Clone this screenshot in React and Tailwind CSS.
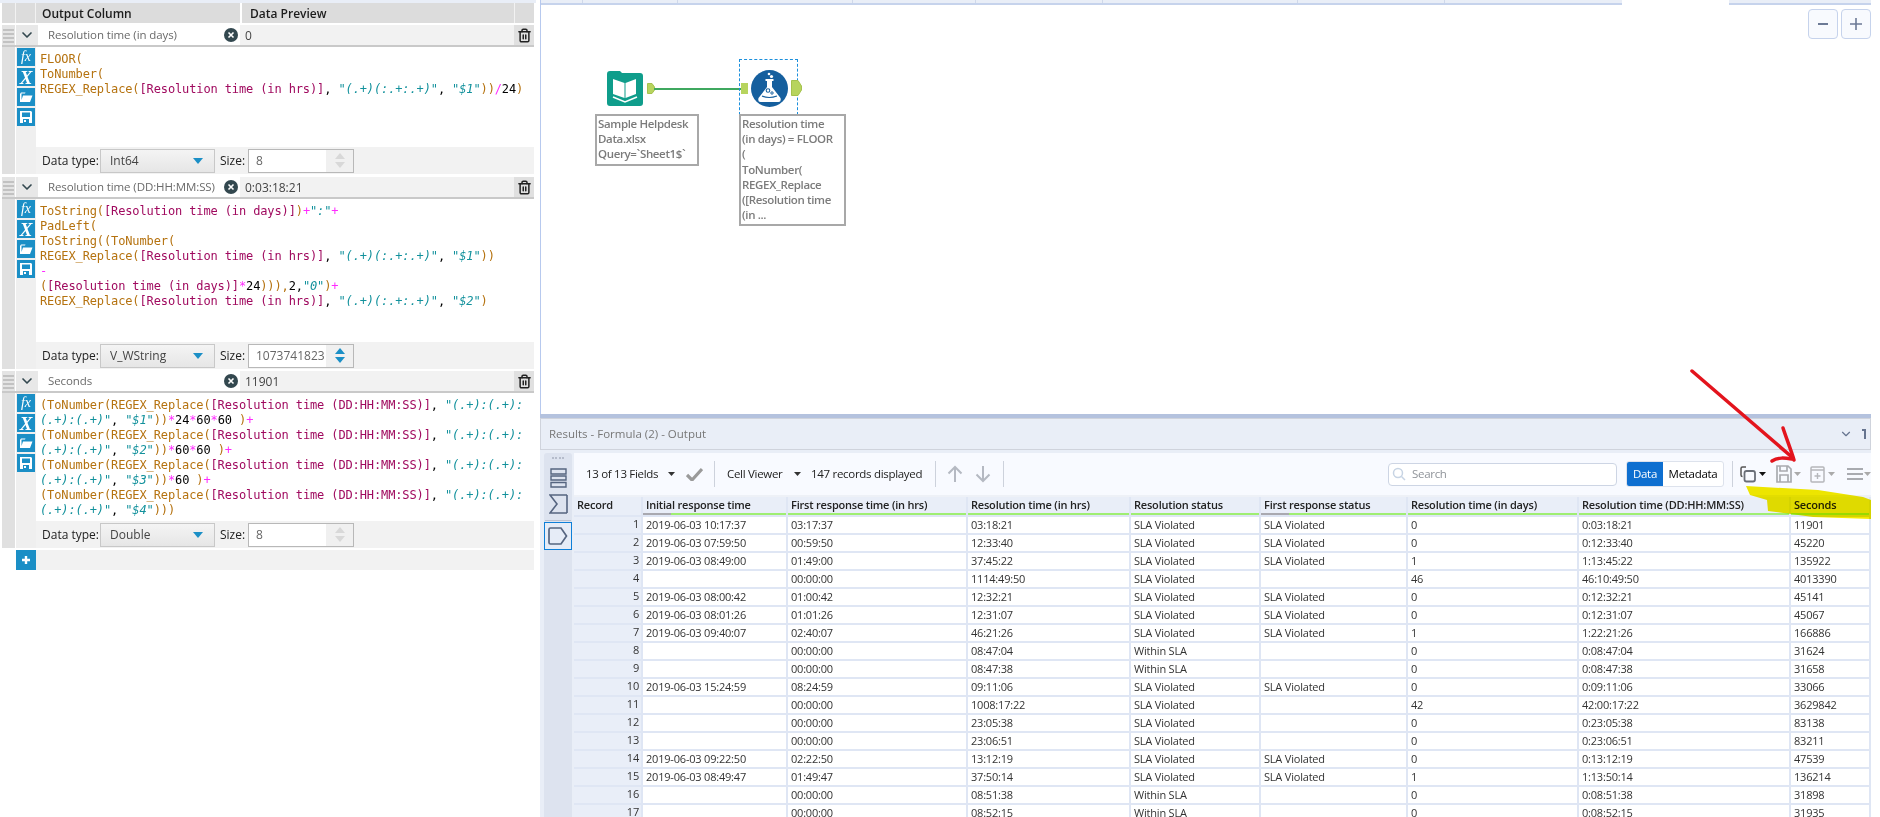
import { ChevronDown, Trash2 } from "lucide-react";

const F = ({ children }) => <span className="text-[#b5720f]">{children}</span>;
const B = ({ children }) => <span className="text-[#a00a5f]">{children}</span>;
const S = ({ children }) => <span className="text-[#12919c] italic">{children}</span>;
const O = ({ children }) => <span className="text-[#ff2bff]">{children}</span>;
const N = ({ children }) => <span className="text-black">{children}</span>;

const secLine = (n, tail) => (
  <>
    <F>(ToNumber(REGEX_Replace(</F>
    <B>[Resolution time (DD:HH:MM:SS)]</B>
    <N>, </N>
    <S>"(.+):(.+):</S>
    {"\n"}
    <S>(.+):(.+)"</S>
    <N>, </N>
    <S>"${n}"</S>
    {tail}
  </>
);

const expressions = [
  {
    name: "Resolution time (in days)",
    preview: "0",
    codeH: "h-[100px]",
    gap: "mb-[3px]",
    type: "Int64",
    size: "8",
    code: (
      <>
        <F>FLOOR(</F>
        {"\n"}
        <F>ToNumber(</F>
        {"\n"}
        <F>REGEX_Replace(</F>
        <B>[Resolution time (in hrs)]</B>
        <N>, </N>
        <S>"(.+)(:.+:.+)"</S>
        <N>, </N>
        <S>"$1"</S>
        <F>))</F>
        <O>/</O>
        <N>24</N>
        <F>)</F>
      </>
    ),
  },
  {
    name: "Resolution time (DD:HH:MM:SS)",
    preview: "0:03:18:21",
    codeH: "h-[143px]",
    gap: "mb-[2px]",
    type: "V_WString",
    size: "1073741823",
    active: true,
    code: (
      <>
        <F>ToString(</F>
        <B>[Resolution time (in days)]</B>
        <F>)</F>
        <O>+</O>
        <S>":"</S>
        <O>+</O>
        {"\n"}
        <F>PadLeft(</F>
        {"\n"}
        <F>ToString((ToNumber(</F>
        {"\n"}
        <F>REGEX_Replace(</F>
        <B>[Resolution time (in hrs)]</B>
        <N>, </N>
        <S>"(.+)(:.+:.+)"</S>
        <N>, </N>
        <S>"$1"</S>
        <F>))</F>
        {"\n"}
        <O>-</O>
        {"\n"}
        <F>(</F>
        <B>[Resolution time (in days)]</B>
        <O>*</O>
        <N>24</N>
        <F>))),</F>
        <N>2,</N>
        <S>"0"</S>
        <F>)</F>
        <O>+</O>
        {"\n"}
        <F>REGEX_Replace(</F>
        <B>[Resolution time (in hrs)]</B>
        <N>, </N>
        <S>"(.+)(:.+:.+)"</S>
        <N>, </N>
        <S>"$2"</S>
        <F>)</F>
      </>
    ),
  },
  {
    name: "Seconds",
    preview: "11901",
    codeH: "h-[128px]",
    gap: "mb-[2px]",
    type: "Double",
    size: "8",
    code: (
      <>
        {secLine(1, <><F>))</F><O>*</O><N>24</N><O>*</O><N>60</N><O>*</O><N>60 </N><F>)</F><O>+</O></>)}
        {"\n"}
        {secLine(2, <><F>))</F><O>*</O><N>60</N><O>*</O><N>60 </N><F>)</F><O>+</O></>)}
        {"\n"}
        {secLine(3, <><F>))</F><O>*</O><N>60 </N><F>)</F><O>+</O></>)}
        {"\n"}
        {secLine(4, <F>)))</F>)}
      </>
    ),
  },
];

const SV = "SLA Violated";
const WS = "Within SLA";
const d = "2019-06-03 ";
const rows = [
  [d + "10:17:37", "03:17:37", "03:18:21", SV, SV, "0", "0:03:18:21", "11901"],
  [d + "07:59:50", "00:59:50", "12:33:40", SV, SV, "0", "0:12:33:40", "45220"],
  [d + "08:49:00", "01:49:00", "37:45:22", SV, SV, "1", "1:13:45:22", "135922"],
  ["", "00:00:00", "1114:49:50", SV, "", "46", "46:10:49:50", "4013390"],
  [d + "08:00:42", "01:00:42", "12:32:21", SV, SV, "0", "0:12:32:21", "45141"],
  [d + "08:01:26", "01:01:26", "12:31:07", SV, SV, "0", "0:12:31:07", "45067"],
  [d + "09:40:07", "02:40:07", "46:21:26", SV, SV, "1", "1:22:21:26", "166886"],
  ["", "00:00:00", "08:47:04", WS, "", "0", "0:08:47:04", "31624"],
  ["", "00:00:00", "08:47:38", WS, "", "0", "0:08:47:38", "31658"],
  [d + "15:24:59", "08:24:59", "09:11:06", SV, SV, "0", "0:09:11:06", "33066"],
  ["", "00:00:00", "1008:17:22", SV, "", "42", "42:00:17:22", "3629842"],
  ["", "00:00:00", "23:05:38", SV, "", "0", "0:23:05:38", "83138"],
  ["", "00:00:00", "23:06:51", SV, "", "0", "0:23:06:51", "83211"],
  [d + "09:22:50", "02:22:50", "13:12:19", SV, SV, "0", "0:13:12:19", "47539"],
  [d + "08:49:47", "01:49:47", "37:50:14", SV, SV, "1", "1:13:50:14", "136214"],
  ["", "00:00:00", "08:51:38", WS, "", "0", "0:08:51:38", "31898"],
  ["", "00:00:00", "08:52:15", WS, "", "0", "0:08:52:15", "31935"],
];

const headers = [
  { label: "Initial response time", gray: true },
  { label: "First response time (in hrs)" },
  { label: "Resolution time (in hrs)" },
  { label: "Resolution status" },
  { label: "First response status", gray: true },
  { label: "Resolution time (in days)" },
  { label: "Resolution time (DD:HH:MM:SS)" },
  { label: "Seconds" },
];

const gridCols = "grid grid-cols-[67px_143px_178px_161px_128px_145px_169px_210px_78px] gap-x-[2px]";

function IconBtn({ children }) {
  return (
    <div className="w-[18px] h-[18px] bg-[#1b8fc6] flex items-center justify-center text-white overflow-hidden">
      {children}
    </div>
  );
}

function Grip() {
  return (
    <div className="flex flex-col gap-[2px] w-[11px] pt-[4px]">
      <div className="h-[2px] bg-[#c2c2c2]" />
      <div className="h-[2px] bg-[#c2c2c2]" />
      <div className="h-[2px] bg-[#c2c2c2]" />
      <div className="h-[2px] bg-[#c2c2c2]" />
    </div>
  );
}

function ExpressionRow({ item }) {
  return (
    <div className={item.gap}>
      <div className="flex h-[20px] bg-[#f2f2f2]">
        <div className="w-[13px] pl-[1px] bg-[#e4e4e4]">
          <Grip />
        </div>
        <div className="w-[1px] bg-white" />
        <div className="w-[21px] bg-[#e8e8e8] flex items-center justify-center">
          <ChevronDown size={16} strokeWidth={2.5} className="text-[#33484f]" />
        </div>
        <div className="w-[203px] relative bg-white border-l border-[#e8e8e8] pl-[10px] text-[11.5px] tracking-[-0.1px] leading-[19px] text-[#6a6a6a] whitespace-nowrap">
          {item.name}
          <div className="absolute right-[2px] top-[3px] w-[14px] h-[14px] rounded-full bg-[#33484f] text-white flex items-center justify-center">
            <svg width="8" height="8" viewBox="0 0 8 8">
              <path d="M1.5 1.5 L6.5 6.5 M6.5 1.5 L1.5 6.5" stroke="white" strokeWidth="1.6" />
            </svg>
          </div>
        </div>
        <div className="w-[274px] pl-[5px] text-[12px] leading-[21px] text-[#444]">{item.preview}</div>
        <div className="w-[20px] bg-[#e0e0e0] flex items-center justify-center">
          <Trash2 size={15} strokeWidth={2.4} className="text-[#222]" />
        </div>
      </div>
      <div className="h-[2px] bg-[#c9c9c9]" />
      <div className="flex">
        <div className="w-[13px] bg-[#e0e0e0]" />
        <div className="w-[1px] bg-white" />
        <div className="w-[20px] bg-[#efefef] pl-[1px] pt-[1px] flex flex-col gap-[2px]">
          <IconBtn>
            <span className="font-['Liberation_Serif',serif] italic text-[14px] leading-none">fx</span>
          </IconBtn>
          <IconBtn>
            <span className="font-['Liberation_Serif',serif] italic font-bold text-[19px] leading-none">X</span>
          </IconBtn>
          <IconBtn>
            <svg width="14" height="12" viewBox="0 0 14 12" fill="white">
              <path d="M1 3 L1 11 L11 11 L13.5 4.5 L4 4.5 L2.5 9 L2.5 2.5 L6 2.5 L6.5 1.5 L2 1.5 Z" />
            </svg>
          </IconBtn>
          <IconBtn>
            <svg width="14" height="14" viewBox="0 0 14 14" fill="white">
              <path d="M1 1 H12 L13 2 V13 H1 Z M3 2.5 V7 H11 V2.5 Z M4 9 V13 H10 V9 Z" fillRule="evenodd" />
              <rect x="5" y="10" width="2" height="2" />
            </svg>
          </IconBtn>
        </div>
        <div className="w-[498px]">
          <div className={`${item.codeH} bg-white pl-[4px] pt-[5px] font-['DejaVu_Sans_Mono',monospace] text-[12px] leading-[15px] whitespace-pre tracking-[-0.12px]`}>
            {item.code}
          </div>
          <div className="h-[27px] bg-[#f2f2f2] flex items-center pl-[6px] text-[12px] text-[#222]">
            <span className="w-[58px]">Data type:</span>
            <div className="w-[115px] h-[24px] border border-[#c8c8c8] bg-gradient-to-b from-[#f4f4f4] to-[#e6e6e6] flex items-center justify-between pl-[9px] pr-[11px] text-[#444]">
              {item.type}
              <svg width="10" height="6" viewBox="0 0 10 6">
                <path d="M0 0 H10 L5 6 Z" fill="#1b8fc6" />
              </svg>
            </div>
            <span className="ml-[5px] w-[28px]">Size:</span>
            <div className="w-[106px] h-[24px] border border-[#b8b8b8] bg-white flex items-center justify-between pl-[7px] text-[#666]">
              {item.size}
              <div className="w-[27px] h-full bg-[#f0f0f0] flex flex-col items-center justify-center gap-[3px]">
                <svg width="10" height="6" viewBox="0 0 10 6">
                  <path d="M0 6 H10 L5 0 Z" fill={item.active ? "#1b8fc6" : "#d8d8d8"} />
                </svg>
                <svg width="10" height="6" viewBox="0 0 10 6">
                  <path d="M0 0 H10 L5 6 Z" fill={item.active ? "#1b8fc6" : "#d8d8d8"} />
                </svg>
              </div>
            </div>
          </div>
        </div>
      </div>
    </div>
  );
}

function LeftPanel() {
  return (
    <div className="w-[538px] shrink-0 bg-white pl-[2px] pr-[4px]">
      <div className="h-[3px] -mx-[2px] bg-[#e9eef7]" />
      <div className="flex h-[20px] bg-[#dcdcdc] text-[12px] font-semibold leading-[22px] text-[#1c1c1c] mb-[2px]">
        <div className="w-[13px]" />
        <div className="w-[1px] bg-[#f2f2f2]" />
        <div className="w-[20px] border-r border-[#f2f2f2]" />
        <div className="w-[204px] pl-[6px]">Output Column</div>
        <div className="w-[2px] bg-white" />
        <div className="w-[272px] pl-[8px]">Data Preview</div>
        <div className="w-[20px] border-l border-[#f2f2f2]" />
      </div>
      {expressions.map((item) => (
        <ExpressionRow key={item.name} item={item} />
      ))}
      <div className="flex h-[20px] bg-[#f2f2f2]">
        <div className="w-[14px] bg-white" />
        <div className="w-[20px] bg-[#1b8fc6] flex items-center justify-center">
          <svg width="10" height="10" viewBox="0 0 10 10">
            <path d="M5 1 V9 M1 5 H9" stroke="white" strokeWidth="2.4" />
          </svg>
        </div>
      </div>
    </div>
  );
}

function Anchor({ big }) {
  return big ? (
    <svg width="11" height="16" viewBox="0 0 11 16">
      <path d="M0.5 0.5 H7 L10.5 6 V10 L7 15.5 H0.5 Z" fill="#b7d45e" stroke="#a5c24e" />
    </svg>
  ) : (
    <svg width="8" height="11" viewBox="0 0 8 11">
      <path d="M0.5 0.5 H5 L7.5 4 V7 L5 10.5 H0.5 Z" fill="#b7d45e" stroke="#a5c24e" />
    </svg>
  );
}

function Canvas() {
  return (
    <div className="h-[414px] relative border-l border-[#b7c9ee] overflow-hidden">
      <div className="flex h-[5px]">
        <div className="w-[1081px] flex bg-[#e9eef7] border-b-2 border-[#c6d3ec]">
          <div className="w-[42px] border-r border-[#cfd8ea]" />
          <div className="w-[95px] border-r border-[#cfd8ea]" />
          <div className="w-[175px] border-r border-[#cfd8ea]" />
          <div className="w-[123px] border-r border-[#cfd8ea]" />
          <div className="w-[127px] border-r border-[#cfd8ea]" />
          <div className="w-[195px] border-r border-[#cfd8ea]" />
          <div className="w-[147px] border-r border-[#cfd8ea]" />
        </div>
        <div className="w-[107px]" />
        <div className="flex-1 bg-[#e9eef7] border-b-2 border-[#c6d3ec]" />
      </div>

      {/* zoom buttons */}
      <div className="absolute top-[9px] left-[1267px] flex gap-[3px]">
        <div className="w-[30px] h-[30px] rounded-[4px] border border-[#c6d3ec] bg-[#f8fafe] flex items-center justify-center">
          <svg width="12" height="12" viewBox="0 0 12 12">
            <path d="M1 6 H11" stroke="#6c7a96" strokeWidth="2" />
          </svg>
        </div>
        <div className="w-[30px] h-[30px] rounded-[4px] border border-[#c6d3ec] bg-[#f8fafe] flex items-center justify-center">
          <svg width="14" height="14" viewBox="0 0 14 14">
            <path d="M1 7 H13 M7 1 V13" stroke="#6c7a96" strokeWidth="1.6" />
          </svg>
        </div>
      </div>

      {/* workflow nodes */}
      <div className="absolute left-[66px] top-[70px] w-[36px] h-[37px]">
        <svg width="36" height="37" viewBox="0 0 36 37">
          <path d="M3 1 H13 L15 3 H33 Q36 3 36 6 V33 Q36 36 33 36 H3 Q0 36 0 33 V4 Q0 1 3 1 Z" fill="#0f9d8b" />
          <path d="M6 9 L17.5 13 V28 L6 24 Z M29 9 L18.5 13 V28 L29 24 Z" fill="white" />
          <path d="M6 27 L18 32 L30 27" stroke="white" strokeWidth="1.6" fill="none" />
        </svg>
      </div>
      <div className="absolute left-[106px] top-[83px] leading-none">
        <Anchor />
      </div>
      <div className="absolute left-[113px] top-[88px] w-[90px] h-[2px] bg-[#3fa85f]" />
      <div className="absolute left-[200px] top-[83px] w-[7px] h-[11px] bg-[#b7d45e]" />
      <div className="absolute left-[198px] top-[59px] w-[59px] h-[56px] border border-dashed border-b-0 border-[#1b8fdc]" />
      <div className="absolute left-[210px] top-[70px] w-[37px] h-[37px]">
        <svg width="37" height="37" viewBox="0 0 37 37">
          <circle cx="18.5" cy="18.5" r="18.5" fill="#155f9e" />
          <path d="M14.5 9 H22.5 V11 H21 V17 L29.5 28 Q30.5 32 27.5 32 H9.5 Q6.5 32 7.5 28 L16 17 V11 H14.5 Z" fill="white" />
          <circle cx="18" cy="4" r="1.3" fill="white" />
          <circle cx="20.5" cy="6.5" r="1.6" fill="white" />
          <circle cx="17" cy="20.5" r="1.8" fill="none" stroke="#155f9e" strokeWidth="1.1" />
          <circle cx="21" cy="23" r="1.2" fill="none" stroke="#155f9e" strokeWidth="1" />
          <path d="M11 26 Q18 29 26 26" stroke="#155f9e" strokeWidth="1.2" fill="none" />
        </svg>
      </div>
      <div className="absolute left-[250px] top-[80px] leading-none">
        <Anchor big />
      </div>
      <div className="absolute left-[54px] top-[114px] w-[104px] h-[52px] border-2 border-[#a8a8a8] bg-white pl-[1px] text-[11.5px] tracking-[-0.35px] leading-[15.2px] font-semibold text-[#7b7b7b]">
        Sample Helpdesk
        <br />
        Data.xlsx
        <br />
        Query=`Sheet1$`
      </div>
      <div className="absolute left-[198px] top-[114px] w-[107px] h-[112px] border-2 border-[#a8a8a8] bg-white pl-[1px] text-[11.5px] tracking-[-0.35px] leading-[15.2px] font-semibold text-[#7b7b7b]">
        Resolution time
        <br />
        (in days) = FLOOR
        <br />(
        <br />
        ToNumber(
        <br />
        REGEX_Replace
        <br />
        ([Resolution time
        <br />
        (in ...
      </div>
    </div>
  );
}

function Caret({ color = "#333" }) {
  return (
    <svg width="7" height="4" viewBox="0 0 7 4">
      <path d="M0 0 H7 L3.5 4 Z" fill={color} />
    </svg>
  );
}

function Sep() {
  return <div className="w-[1px] h-[26px] bg-[#cdd2dc]" />;
}

function Toolbar() {
  return (
    <div className="h-[42px] bg-[#f8faff] flex items-center pl-[12px] text-[11.5px] tracking-[-0.3px] text-[#222] whitespace-nowrap">
      <span className="w-[74px]">13 of 13 Fields</span>
      <span className="ml-[8px]">
        <Caret />
      </span>
      <svg className="ml-[11px]" width="17" height="14" viewBox="0 0 17 14">
        <path d="M1 8 L6 13 L16 2" stroke="#9a9a9a" strokeWidth="3.2" fill="none" />
      </svg>
      <div className="ml-[11px]">
        <Sep />
      </div>
      <span className="ml-[12px] w-[59px]">Cell Viewer</span>
      <span className="ml-[8px]">
        <Caret />
      </span>
      <span className="ml-[10px] w-[113px]">147 records displayed</span>
      <div className="ml-[11px]">
        <Sep />
      </div>
      <svg className="ml-[11px]" width="16" height="18" viewBox="0 0 16 18">
        <path d="M8 17 V2 M1.5 8.5 L8 2 L14.5 8.5" stroke="#b5b9c2" strokeWidth="2" fill="none" />
      </svg>
      <svg className="ml-[12px]" width="16" height="18" viewBox="0 0 16 18">
        <path d="M8 1 V16 M1.5 9.5 L8 16 L14.5 9.5" stroke="#b5b9c2" strokeWidth="2" fill="none" />
      </svg>
      <div className="ml-[12px]">
        <Sep />
      </div>

      <div className="ml-auto w-[229px] h-[23px] rounded-[4px] border border-[#cdd5e4] bg-white flex items-center pl-[3px] text-[#8f9399]">
        <svg width="14" height="14" viewBox="0 0 14 14">
          <circle cx="6" cy="6" r="4.5" stroke="#c7d4e4" strokeWidth="1.5" fill="none" />
          <path d="M9.5 9.5 L13 13" stroke="#c7d4e4" strokeWidth="1.5" />
        </svg>
        <span className="ml-[6px]">Search</span>
      </div>
      <div className="ml-[9px] h-[26px] flex rounded-[3px] border border-[#dde2ec] bg-white overflow-hidden">
        <div className="w-[36px] bg-[#0e6fd0] text-white flex items-center justify-center">Data</div>
        <div className="w-[60px] text-black flex items-center justify-center">Metadata</div>
      </div>
      <div className="ml-[8px]">
        <Sep />
      </div>
      <svg className="ml-[7px]" width="17" height="17" viewBox="0 0 17 17" fill="none">
        <path d="M6 1 H2.5 Q1 1 1 2.5 V9 Q1 10.5 2.5 10.5" stroke="#555" strokeWidth="1.5" />
        <path d="M6.5 5 H13 Q15 5 15 7 V13.5 Q15 15.5 13 15.5 H6.5 Q4.5 15.5 4.5 13.5 V7 Q4.5 5 6.5 5 Z" stroke="#6a6f78" strokeWidth="1.8" />
      </svg>
      <span className="ml-[2px]">
        <Caret color="#111" />
      </span>
      <svg className="ml-[10px]" width="16" height="18" viewBox="0 0 16 18" fill="none">
        <path d="M1 1 H12 L15 4 V17 H1 Z M4 1 V6 H11 V1 M4 17 V10 H12 V17" stroke="#a9abb0" strokeWidth="1.7" />
      </svg>
      <span className="ml-[2px]">
        <Caret color="#aaa" />
      </span>
      <svg className="ml-[9px]" width="15" height="17" viewBox="0 0 15 17" fill="none">
        <rect x="1" y="1" width="13" height="15" rx="1" stroke="#b5b7bb" strokeWidth="1.5" />
        <path d="M1 4 H14 M7.5 7 V13 M4.5 10 H10.5" stroke="#b5b7bb" strokeWidth="1.4" />
      </svg>
      <span className="ml-[3px]">
        <Caret color="#aaa" />
      </span>
      <svg className="ml-[12px]" width="16" height="14" viewBox="0 0 16 14">
        <path d="M0 2 H16 M0 7 H16 M0 12 H16" stroke="#a9abb0" strokeWidth="2" />
      </svg>
      <span className="ml-[1px]">
        <Caret color="#aaa" />
      </span>
    </div>
  );
}

function Rail() {
  return (
    <div className="w-[28px] ml-[4px] mr-[2px] bg-[#dde3ef] rounded-t-[3px] flex flex-col items-center pt-[4px]">
      <div className="w-[12px] border-t-2 border-dotted border-[#b5bccb]" />
      <svg className="mt-[9px]" width="17" height="20" viewBox="0 0 17 20" fill="none">
        <path d="M1 1 H16 V6 H1 Z M1 8 H16 V12 H1 Z M1 14.5 H16 V19 H1 Z" stroke="#566580" strokeWidth="1.4" />
      </svg>
      <svg className="mt-[6px]" width="19" height="20" viewBox="0 0 19 20" fill="none">
        <path d="M18 1 H1 L8 10 L1 19 H18" stroke="#566580" strokeWidth="1.6" />
        <path d="M18 1 V19" stroke="#566580" strokeWidth="1.6" />
      </svg>
      <div className="mt-[6px] w-[26px] h-[1px] bg-[#bcc3d2]" />
      <div className="mt-[1px] w-[28px] h-[28px] border border-[#0e7fd8] bg-[#e6ecf7] flex items-center justify-center">
        <svg width="20" height="18" viewBox="0 0 20 18" fill="none">
          <path d="M2.5 1 H13 L18.5 9 L13 17 H2.5 Q1 17 1 15.5 V2.5 Q1 1 2.5 1 Z" stroke="#566580" strokeWidth="1.7" />
        </svg>
      </div>
    </div>
  );
}

function DataTable() {
  return (
    <div className="bg-[#dfe6f4] text-[11px] tracking-[-0.2px] text-[#333]">
      <div className={`${gridCols} h-[18px] mb-[2px] bg-[#dfe6f4]`}>
        <div className="bg-[#e9eef8] pl-[3px] font-semibold leading-[15px] text-[#222]">Record</div>
        {headers.map((h) => (
          <div key={h.label} className="bg-[#e9eef8] relative pl-[3px] font-semibold leading-[15px] text-[#222] whitespace-nowrap">
            {h.label}
            <div className="absolute left-0 right-0 bottom-0 h-[2px] bg-[#9fee72]" />
            {h.gray && <div className="absolute left-0 w-[28px] bottom-0 h-[2px] bg-[#a9a9b0]" />}
          </div>
        ))}
      </div>
      {rows.map((row, i) => (
        <div key={i} className={`${gridCols} h-[16px] mb-[2px]`}>
          <div className="bg-[#e9eef8] text-right pr-[2px] leading-[14px]">{i + 1}</div>
          {row.map((v, j) => (
            <div key={j} className="bg-white pl-[3px] leading-[15px] whitespace-nowrap">
              {v}
            </div>
          ))}
        </div>
      ))}
    </div>
  );
}

function Results() {
  return (
    <div className="flex-1 min-h-0 flex flex-col">
      <div className="h-[4px] bg-[#b4c2de]" />
      <div className="h-[32px] bg-[#e9eef7] border border-[#cfd3dc] flex items-center justify-between pl-[8px] pr-[4px] text-[11.5px] text-[#777]">
        <span>Results - Formula (2) - Output</span>
        <div className="flex items-center gap-[9px]">
          <ChevronDown size={14} className="text-[#66748f]" />
          <span className="w-[4px] h-[10px] border-t-2 border-r-2 border-[#66748f]" />
        </div>
      </div>
      <div className="flex-1 min-h-0 flex bg-[#e9eef7] pt-[3px] overflow-hidden">
        <Rail />
        <div className="flex-1 min-w-0 overflow-hidden">
          <Toolbar />
          <div className="h-[2px] bg-[#eef1f7]" />
          <DataTable />
        </div>
      </div>
    </div>
  );
}

export default function App() {
  return (
    <div className="relative w-[1880px] h-[817px] overflow-hidden flex bg-white font-['Open_Sans','Noto_Sans',sans-serif]">
      <LeftPanel />
      <div className="w-[2px] shrink-0 bg-white" />
      <div className="w-[1331px] shrink-0 flex flex-col">
        <Canvas />
        <Results />
      </div>

      {/* hand-drawn markup on top of the screenshot */}
      <svg className="absolute inset-0 pointer-events-none mix-blend-multiply" width="1880" height="817" viewBox="0 0 1880 817">
        <path
          d="M1746 486 L1818 490 L1863 497 L1871 500 L1871 519 L1813 517 L1768 511 L1767 500 L1750 495 Z"
          fill="#f4ea00"
        />
      </svg>
      <svg className="absolute inset-0 pointer-events-none" width="1880" height="817" viewBox="0 0 1880 817">
        <path d="M1692 371 L1793 458" stroke="#e3141d" strokeWidth="3.5" fill="none" strokeLinecap="round" />
        <path d="M1783 428 C1787 440 1791 450 1794 460" stroke="#e3141d" strokeWidth="3.5" fill="none" strokeLinecap="round" />
        <path d="M1772 461 C1778 457 1785 458 1792 459" stroke="#e3141d" strokeWidth="3.5" fill="none" strokeLinecap="round" />
      </svg>
    </div>
  );
}
